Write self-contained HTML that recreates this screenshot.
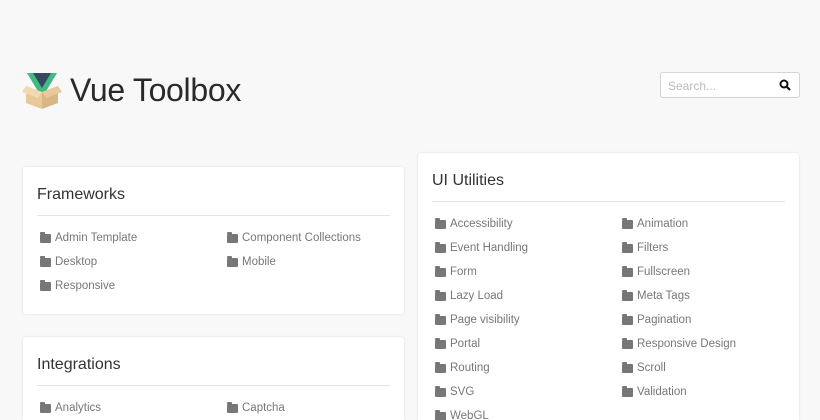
<!DOCTYPE html>
<html><head><style>
*{margin:0;padding:0;box-sizing:border-box}
html,body{width:820px;height:420px;overflow:hidden}
body{background:#f8f8f8;font-family:"Liberation Sans",sans-serif;position:relative}
.logo{position:absolute;left:22px;top:70px;display:flex;align-items:center}
.logo span{font-size:32px;color:#2a2a2a;margin-left:8px;letter-spacing:-0.3px}
.search{position:absolute;left:660px;top:72px;width:140px;height:26px;border:1px solid #d4d4d4;border-radius:3px;background:#fff;font-size:12px;color:#bbb;padding:6px 7px}
.search svg{position:absolute;right:8px;top:6px}
.card{position:absolute;background:#fff;border-radius:3px 3px 0 0;box-shadow:0 0 2px rgba(0,0,0,.12);padding:0 14px;overflow:hidden}
.card h2{font-weight:normal;font-size:16px;color:#333;border-bottom:1px solid #e4e4e4;padding:19px 0 11px 0}
.grid{display:grid;grid-template-columns:187px 1fr;padding:16px 3px 0}
.it{font-size:11.5px;color:#777;height:24px;display:flex;align-items:flex-start}
.it i{display:inline-block;width:11px;height:9px;background:#777;border-radius:1px;margin:2px 4px 0 0;position:relative}
.it i:before{content:"";position:absolute;left:0;top:-2px;width:5px;height:2px;background:#777;border-radius:1px 1px 0 0}
</style></head><body>
<div class="logo">
<svg width="40" height="40" viewBox="0 0 40 40">
<polygon points="5,3 35,3 20,28" fill="#42b883"/>
<polygon points="11,3 29,3 20,18" fill="#35495e"/>
<polygon points="4,16 20,22 20,39 4,33" fill="#e8c99a"/>
<polygon points="20,22 36,16 36,33 20,39" fill="#d9b784"/>
<polygon points="4,16 0,22 16,28 20,22" fill="#f2d9b0"/>
<polygon points="36,16 40,22 24,28 20,22" fill="#e8c99a"/>
</svg><span>Vue Toolbox</span></div>
<div class="search">Search...<svg width="12" height="12" viewBox="0 0 12 12"><circle cx="5" cy="5" r="3.5" stroke="#111" stroke-width="2" fill="none"/><line x1="7.5" y1="7.5" x2="11" y2="11" stroke="#111" stroke-width="2.2"/></svg></div>
<div class="card" style="left:23px;top:167px;width:381px;height:147px;border-radius:3px">
<h2>Frameworks</h2>
<div class="grid">
<div class="it"><i></i>Admin Template</div><div class="it"><i></i>Component Collections</div>
<div class="it"><i></i>Desktop</div><div class="it"><i></i>Mobile</div>
<div class="it"><i></i>Responsive</div>
</div></div>
<div class="card" style="left:23px;top:337px;width:381px;height:83px">
<h2>Integrations</h2>
<div class="grid">
<div class="it"><i></i>Analytics</div><div class="it"><i></i>Captcha</div>
</div></div>
<div class="card" style="left:418px;top:153px;width:381px;height:267px">
<h2>UI Utilities</h2>
<div class="grid">
<div class="it"><i></i>Accessibility</div><div class="it"><i></i>Animation</div>
<div class="it"><i></i>Event Handling</div><div class="it"><i></i>Filters</div>
<div class="it"><i></i>Form</div><div class="it"><i></i>Fullscreen</div>
<div class="it"><i></i>Lazy Load</div><div class="it"><i></i>Meta Tags</div>
<div class="it"><i></i>Page visibility</div><div class="it"><i></i>Pagination</div>
<div class="it"><i></i>Portal</div><div class="it"><i></i>Responsive Design</div>
<div class="it"><i></i>Routing</div><div class="it"><i></i>Scroll</div>
<div class="it"><i></i>SVG</div><div class="it"><i></i>Validation</div>
<div class="it"><i></i>WebGL</div>
</div></div>
</body></html>
